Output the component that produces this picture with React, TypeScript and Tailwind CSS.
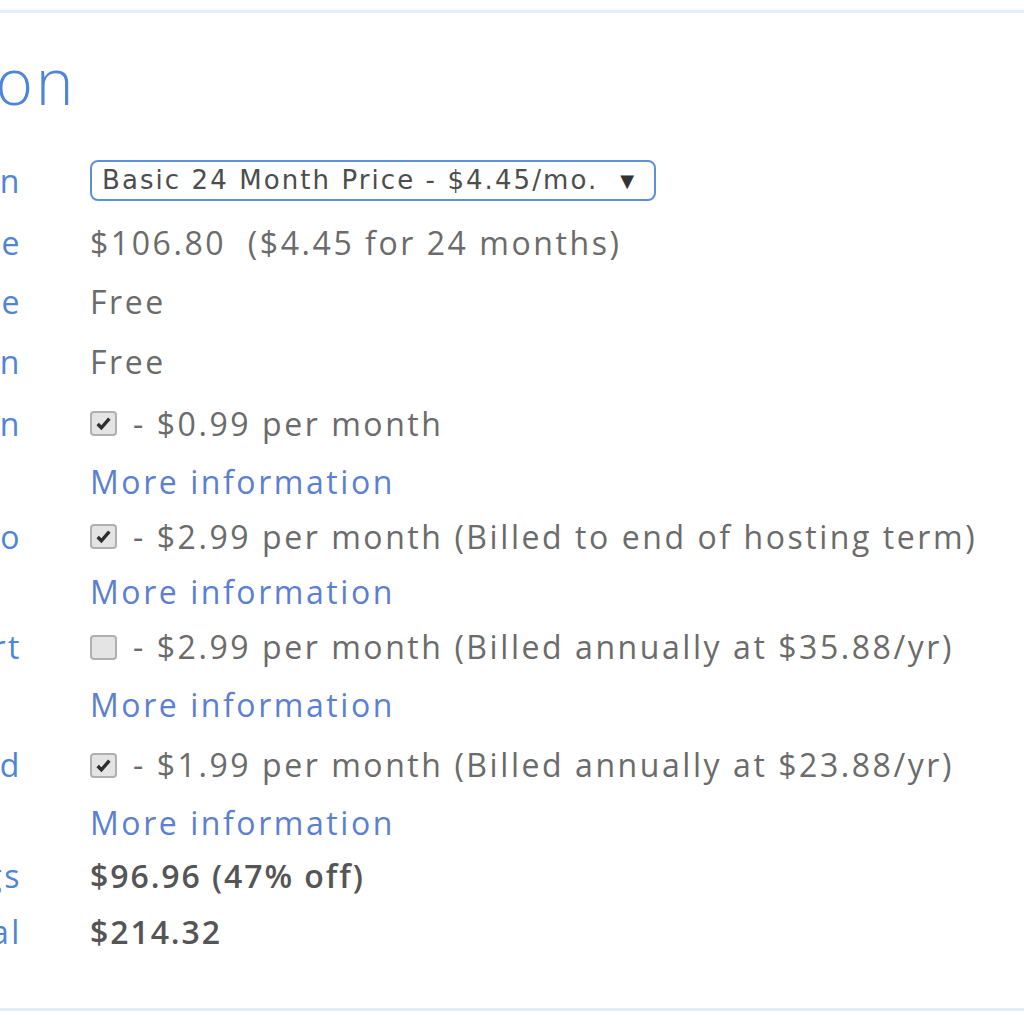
import React from "react";

const font = { fontFamily: '"Open Sans", "Liberation Sans", sans-serif' };

function Check({ on }: { on: boolean }) {
  return (
    <span className="mr-[16px] inline-flex h-[25px] w-[27px] shrink-0 items-center justify-center rounded-[4px] border-2 border-[#b0b0b0] bg-[#e4e4e4]">
      {on && (
        <svg viewBox="0 0 16 16" className="h-[17px] w-[17px]">
          <path d="M2.5 8.5 L6 12 L13.5 3.5" fill="none" stroke="#2e2e2e" strokeWidth="3.2" />
        </svg>
      )}
    </span>
  );
}

function Row({ label, h, children }: { label?: string; h: string; children: React.ReactNode }) {
  return (
    <>
      <div className={`flex items-center justify-end whitespace-nowrap ${h} text-[#4f84d6]`}>{label}</div>
      <div className={`flex items-center whitespace-nowrap ${h}`}>{children}</div>
    </>
  );
}

function More() {
  return <span className="text-[#5b7fd2]">More information</span>;
}

export default function App() {
  return (
    <div className="h-[1024px] w-[1024px] overflow-hidden bg-white" style={font}>
      <div className="mt-[10px] h-[3px] bg-[#e3eefb]" />
      <div className="flex h-[135px] items-center">
        <h1 className="-ml-[700px] w-[776px] whitespace-nowrap text-right text-[64px] font-light tracking-[0.04em] text-[#4f84d6]">
          Package Information
        </h1>
      </div>
      <div className="-ml-[578px] grid grid-cols-[600px_1fr] gap-x-[68px] text-[32px] tracking-[0.08em] text-[#6b6b6b]">
        <Row label="Account Plan" h="h-[65px]">
          <div className="flex h-[41px] w-[566px] items-center justify-between rounded-[8px] border-2 border-[#5d90d8] pl-[10px] pr-[20px] text-[26px] tracking-[0.08em] text-[#4d4d4d]" style={{ fontFamily: '"DejaVu Sans", Verdana, sans-serif' }}>
            <span>Basic 24 Month Price - $4.45/mo.</span>
            <span className="text-[18px] tracking-normal text-[#333]">▼</span>
          </div>
        </Row>
        <Row label="Hosting Price" h="h-[60px]">$106.80&nbsp; ($4.45 for 24 months)</Row>
        <Row label="Setup Fee" h="h-[58px]">Free</Row>
        <Row label="Domain Registration" h="h-[62px]">Free</Row>
        <Row label="Domain Privacy Protection" h="h-[61px]">
          <Check on />- $0.99 per month
        </Row>
        <Row h="h-[55px]"><More /></Row>
        <Row label="Site Backup Pro" h="h-[55px]">
          <Check on />- $2.99 per month (Billed to end of hosting term)
        </Row>
        <Row h="h-[55px]"><More /></Row>
        <Row label="Search Engine Jumpstart" h="h-[56px]">
          <Check on={false} />- $2.99 per month (Billed annually at $35.88/yr)
        </Row>
        <Row h="h-[60px]"><More /></Row>
        <Row label="SiteLock Security - Find" h="h-[60px]">
          <Check on />- $1.99 per month (Billed annually at $23.88/yr)
        </Row>
        <Row h="h-[55px]"><More /></Row>
        <Row label="Savings" h="h-[52px]">
          <span className="font-semibold tracking-[0.06em] text-[#555]">$96.96 (47% off)</span>
        </Row>
        <Row label="Total" h="h-[60px]">
          <span className="font-semibold tracking-[0.06em] text-[#555]">$214.32</span>
        </Row>
      </div>
      <div className="mt-[46px] h-[3px] bg-[#e3eefb]" />
    </div>
  );
}
